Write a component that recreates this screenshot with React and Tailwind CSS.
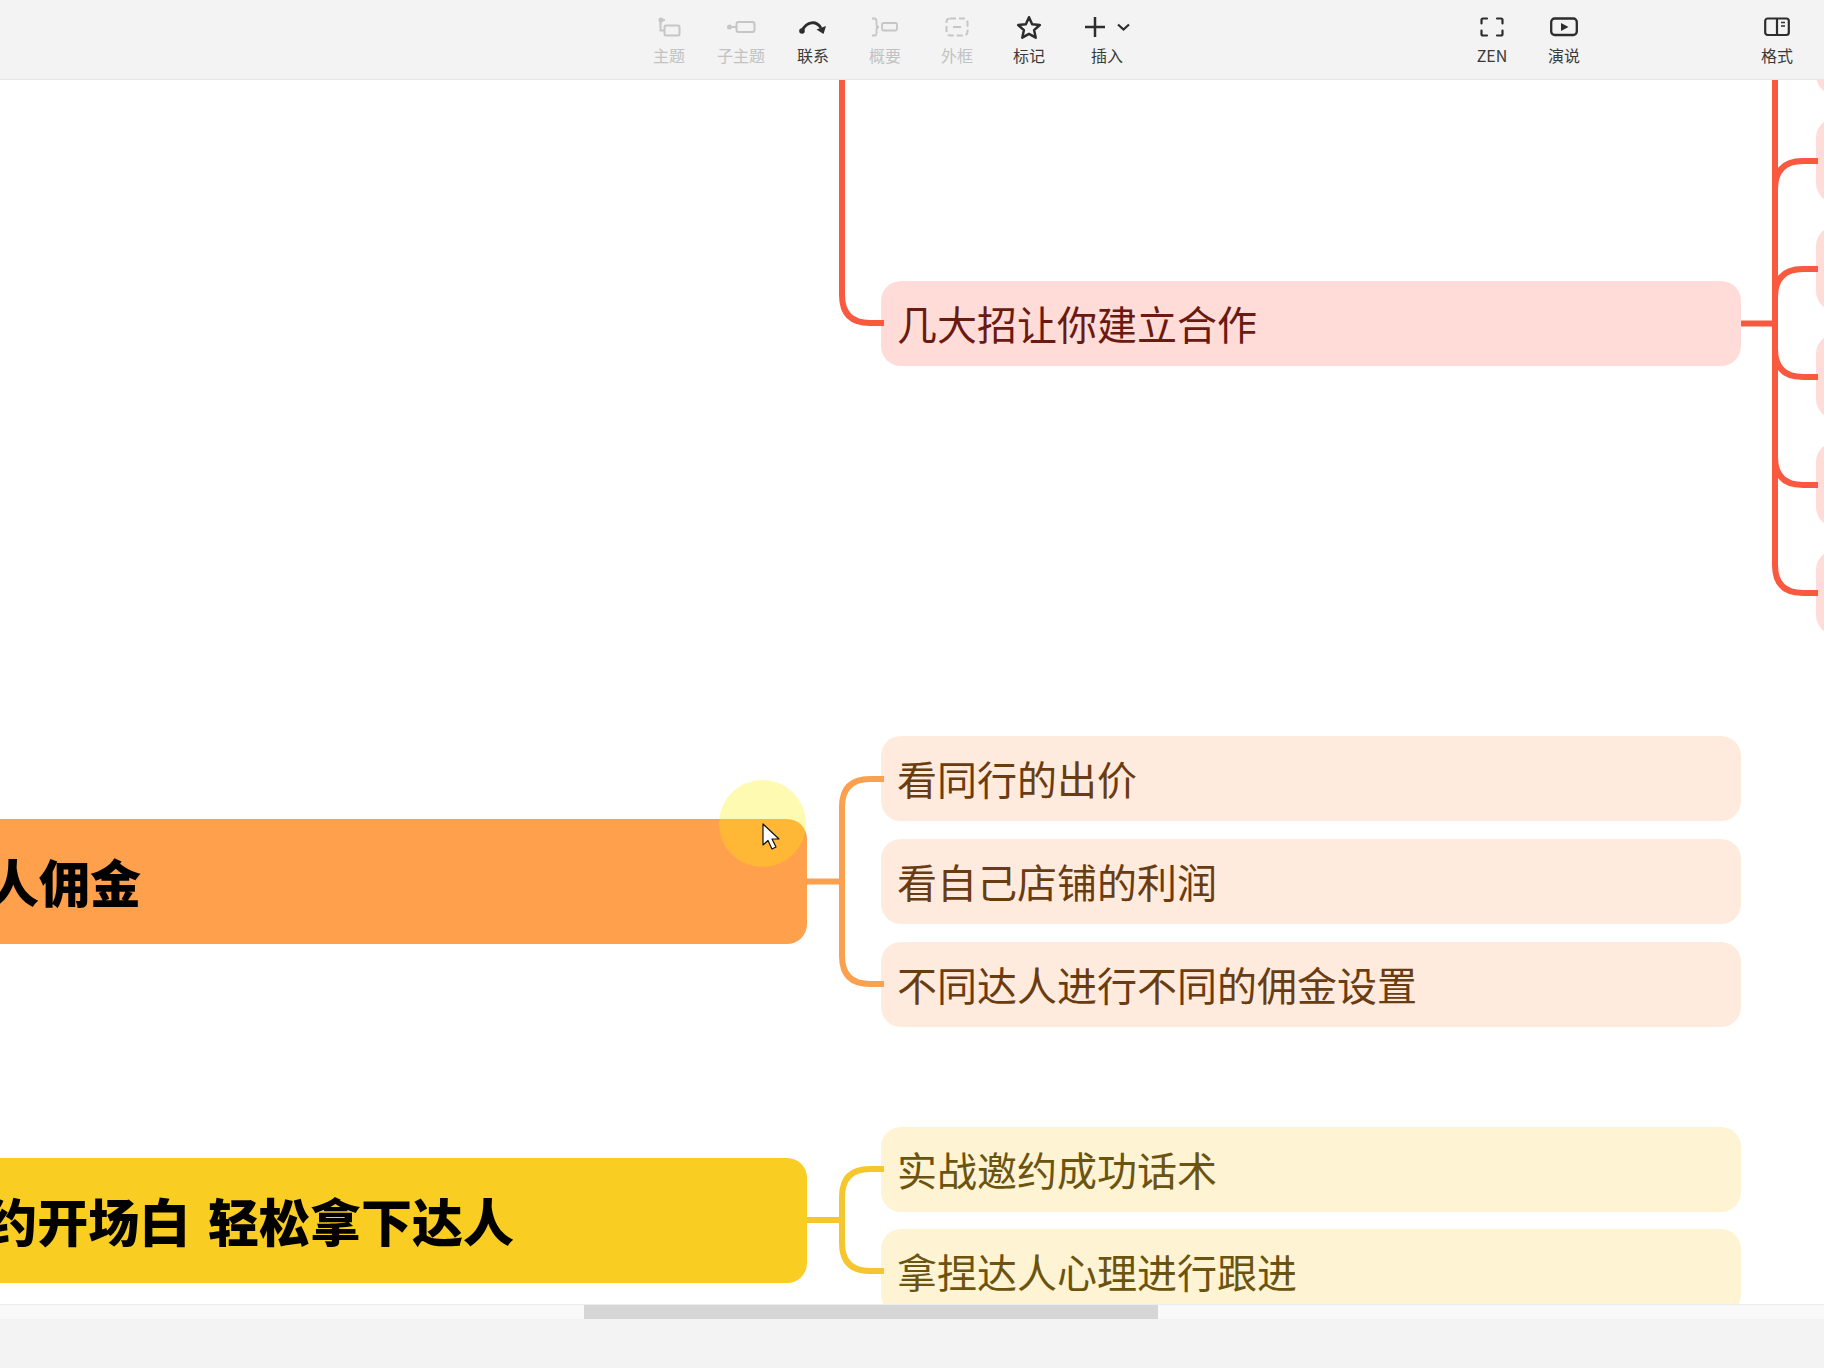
const CJK = "font-['Noto_Sans_CJK_SC','Noto_Sans',sans-serif]";

function ToolItem({ label, disabled, wide, children, className = "" }) {
  return (
    <div className={`flex flex-col items-center pt-[15px] shrink-0 ${wide ? "w-[84px]" : "w-[72px]"} ${className}`}>
      <div className="h-6 flex items-center justify-center">{children}</div>
      <div className={`mt-[5px] text-[16px] leading-[22px] ${disabled ? "text-[#c2c2c2]" : "text-[#3a3a3a]"}`}>{label}</div>
    </div>
  );
}

const IconTopic = () => (
  <svg width="24" height="20" viewBox="0 0 24 20" fill="none" stroke="#c6c6c6" strokeWidth="2">
    <circle cx="4" cy="3" r="1.6" fill="#c6c6c6" />
    <path d="M8 3H3.5V13.5H7" />
    <rect x="7.5" y="8.5" width="15" height="10" rx="1.5" />
  </svg>
);
const IconSub = () => (
  <svg width="30" height="14" viewBox="0 0 30 14" fill="none" stroke="#c6c6c6" strokeWidth="2">
    <circle cx="3.5" cy="7" r="2.5" fill="#c6c6c6" stroke="none" />
    <path d="M6 7H10" />
    <rect x="10.5" y="2" width="18" height="10" rx="2" />
  </svg>
);
const IconRelation = () => (
  <svg width="28" height="18" viewBox="0 0 28 18" fill="none">
    <circle cx="3" cy="13" r="2.8" fill="#2d2d2d" />
    <path d="M3 12.500C8 3.500 17 2 22 10" stroke="#2d2d2d" strokeWidth="2.800" />
    <path d="M27 8L24.500 16L17.500 11.500Z" fill="#2d2d2d" />
  </svg>
);
const IconSummary = () => (
  <svg width="28" height="20" viewBox="0 0 28 20" fill="none" stroke="#c6c6c6" strokeWidth="1.8">
    <path d="M1 1.5H3.5C5 1.5 5.5 2.5 5.5 4V7.5C5.5 9 6.5 10 8 10C6.5 10 5.5 11 5.5 12.5V16C5.5 17.5 5 18.5 3.500 18.500H1" />
    <rect x="11" y="6" width="15" height="7.500" rx="1.500" />
  </svg>
);
const IconBoundary = () => (
  <svg width="24" height="20" viewBox="0 0 24 20" fill="none" stroke="#c6c6c6" strokeWidth="2">
    <rect x="1.500" y="1.500" width="21" height="17" rx="3.500" strokeDasharray="6 3" />
    <path d="M8 10H16" />
  </svg>
);
const IconStar = () => (
  <svg width="26" height="25" viewBox="0 0 24 23" fill="none" stroke="#2d2d2d" strokeWidth="2.300" strokeLinejoin="round">
    <path d="M12 2L14.900 8.400L22 9.200L16.700 13.900L18.200 20.900L12 17.400L5.800 20.900L7.300 13.900L2 9.200L9.100 8.400Z" />
  </svg>
);
const IconPlus = () => (
  <svg width="46" height="22" viewBox="0 0 46 22" fill="none" stroke="#2d2d2d">
    <path d="M11 1V21M1 11H21" strokeWidth="2.500" />
    <path d="M34 8.500L39.500 13.500L45 8.500" strokeWidth="2.200" />
  </svg>
);
const IconZen = () => (
  <svg width="24" height="20" viewBox="0 0 24 20" fill="none" stroke="#2d2d2d" strokeWidth="2.200" strokeLinecap="round">
    <path d="M7 1.500H3C2 1.500 1.500 2 1.500 3V6.500M17 1.500H21C22 1.500 22.500 2 22.500 3V6.500M1.500 13.500V17C1.500 18 2 18.500 3 18.500H7M22.500 13.500V17C22.500 18 22 18.500 21 18.500H17" />
  </svg>
);
const IconPlay = () => (
  <svg width="28" height="20" viewBox="0 0 28 20" fill="none">
    <rect x="1.200" y="1.500" width="25.600" height="16.500" rx="3.500" stroke="#2d2d2d" strokeWidth="2.300" />
    <path d="M11 6L18.500 10L11 14Z" fill="#2d2d2d" />
  </svg>
);
const IconFormat = () => (
  <svg width="26" height="20" viewBox="0 0 26 20" fill="none" stroke="#2d2d2d" strokeWidth="2.200">
    <rect x="1.200" y="1.500" width="23.600" height="16.500" rx="2.500" />
    <path d="M13 1.500V18" />
    <path d="M17 5.500H21M17 9H21" strokeWidth="1.500" />
  </svg>
);

function Node({ top, left = 881, width = 860, bg, color, children }) {
  return (
    <div
      className={`absolute h-[85px] rounded-[20px] flex items-center pl-4 text-[40px] leading-[85px] whitespace-nowrap ${bg} ${color}`}
      style={{ top: top - 80, left, width }}
    >
      {children}
    </div>
  );
}

function Connectors() {
  return (
    <svg className="absolute inset-0 w-full h-full" viewBox="0 80 1824 1224" fill="none" strokeWidth="6">
      <g stroke="#f9593f">
        <path d="M842 70V295Q842 323 870 323H884" />
        <path d="M1741 323.500H1775" />
        <path d="M1775 70V565Q1775 593 1803 593H1818" />
        <path d="M1818 161H1803Q1775 161 1775 189" />
        <path d="M1818 269H1803Q1775 269 1775 297" />
        <path d="M1818 377H1803Q1775 377 1775 349" />
        <path d="M1818 485H1803Q1775 485 1775 457" />
      </g>
      <g stroke="#fba04f">
        <path d="M806 881.500H842" />
        <path d="M884 779H870Q842 779 842 807V956Q842 984 870 984H884" />
      </g>
      <g stroke="#f6c62e">
        <path d="M806 1220H842" />
        <path d="M884 1169H870Q842 1169 842 1197V1243Q842 1271 870 1271H884" />
      </g>
    </svg>
  );
}

export default function App() {
  return (
    <div className={`w-[1824px] h-[1368px] flex flex-col overflow-hidden bg-white ${CJK}`}>
      <header className="h-20 shrink-0 bg-[#f3f3f3] border-b border-[#e6e6e6] flex pl-[633px]">
        <ToolItem label="主题" disabled><IconTopic /></ToolItem>
        <ToolItem label="子主题" disabled><IconSub /></ToolItem>
        <ToolItem label="联系"><IconRelation /></ToolItem>
        <ToolItem label="概要" disabled><IconSummary /></ToolItem>
        <ToolItem label="外框" disabled><IconBoundary /></ToolItem>
        <ToolItem label="标记"><IconStar /></ToolItem>
        <ToolItem label="插入" wide><IconPlus /></ToolItem>
        <ToolItem label="ZEN" className="ml-[307px]"><IconZen /></ToolItem>
        <ToolItem label="演说"><IconPlay /></ToolItem>
        <ToolItem label="格式" className="ml-[141px]"><IconFormat /></ToolItem>
      </header>

      <main className="relative h-[1224px] shrink-0 overflow-hidden bg-white">
        <Node top={281} bg="bg-[#ffdcd8]" color="text-[#6a1a10]">几大招让你建立合作</Node>
        {[10, 118, 226, 334, 442, 550].map((t) => (
          <Node key={t} top={t} left={1816} width={300} bg="bg-[#ffdcd8]" color="text-[#6a1a10]" />
        ))}

        <Node top={736} bg="bg-[#ffebdd]" color="text-[#6a3c12]">看同行的出价</Node>
        <Node top={839} bg="bg-[#ffebdd]" color="text-[#6a3c12]">看自己店铺的利润</Node>
        <Node top={942} bg="bg-[#ffebdd]" color="text-[#6a3c12]">不同达人进行不同的佣金设置</Node>

        <Node top={1127} bg="bg-[#fef3d3]" color="text-[#6a5410]">实战邀约成功话术</Node>
        <Node top={1229} bg="bg-[#fef3d3]" color="text-[#6a5410]">拿捏达人心理进行跟进</Node>

        <Connectors />

        <div className="absolute left-[-40px] w-[847px] top-[739px] h-[125px] rounded-[20px] bg-[#ffa04c] flex items-center justify-end pr-[666px] text-[51px] font-black text-black whitespace-nowrap">
          达人佣金
        </div>
        <div className="absolute left-[-40px] w-[847px] top-[1078px] h-[125px] rounded-[20px] bg-[#f9cd21] flex items-center justify-end pr-[293px] text-[51px] font-black text-black whitespace-nowrap [word-spacing:6px]">
          邀约开场白 轻松拿下达人
        </div>

        <div className="absolute left-[719px] top-[700px] w-[87px] h-[87px] rounded-full bg-[#ffee00]/30" />
        <svg className="absolute left-[762px] top-[743px]" width="20" height="28" viewBox="0 0 20 28">
          <path d="M1 1V22L6 17.500L10 26L14 24L10 16H17Z" fill="#fff" stroke="#111" strokeWidth="1.200" strokeLinejoin="round" />
        </svg>
      </main>

      <div className="h-[15px] shrink-0 bg-[#f9f9f9] border-t border-[#ececec] pl-[584px]">
        <div className="w-[574px] h-full bg-[#d6d6d6]" />
      </div>
      <footer className="flex-1 bg-[#f3f3f3]" />
    </div>
  );
}
